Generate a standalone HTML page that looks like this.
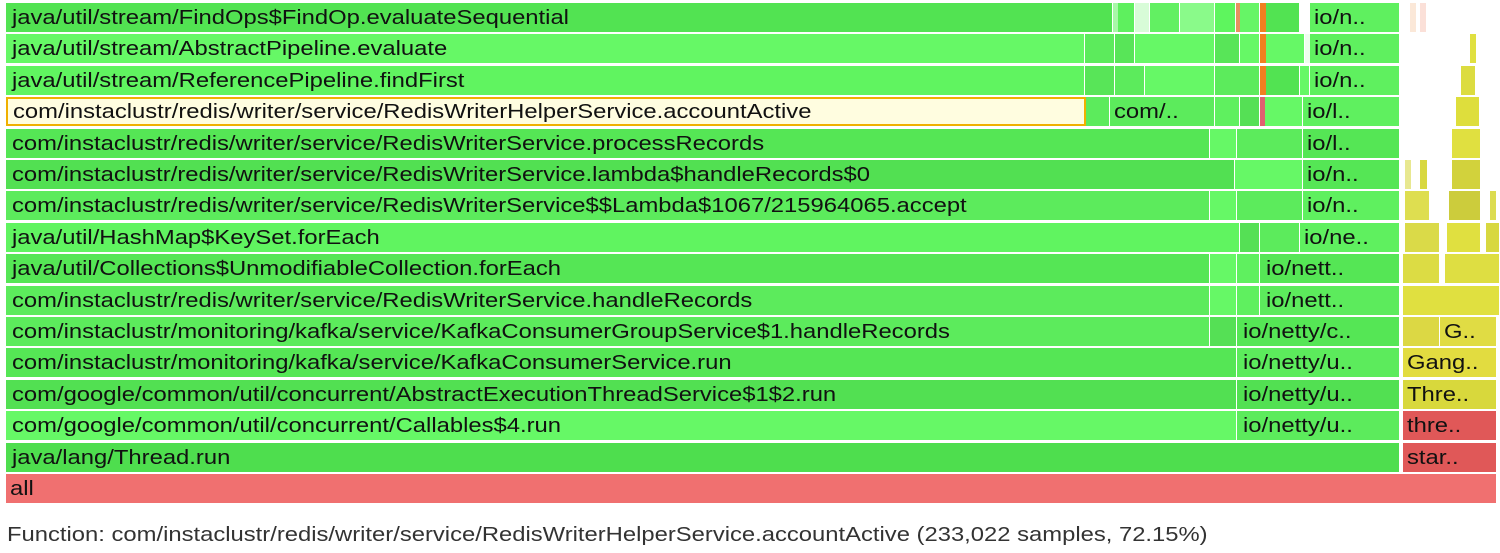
<!DOCTYPE html>
<html><head><meta charset="utf-8"><style>
html,body{margin:0;padding:0;background:#fff;width:1500px;height:553px;overflow:hidden;font-family:"Liberation Sans",sans-serif}
.f{position:absolute;height:29px;font-size:20px;line-height:30px;color:#111;white-space:nowrap;overflow:hidden;box-sizing:border-box;padding-left:6px}
.f span,#info span{display:inline-block;transform:scaleX(1.19);transform-origin:left center}
#info{position:absolute;left:7px;top:524px;font-size:20px;color:#333;white-space:nowrap}
</style></head><body>
<div id="g"></div>
<div id="info"><span>Function: com/instaclustr/redis/writer/service/RedisWriterHelperService.accountActive (233,022 samples, 72.15%)</span></div>
<script>
var rows=[
[[6,1113,'#52e352','java/util/stream/FindOps$FindOp.evaluateSequential'],[1113,1118,'#a8f8a8'],[1118,1135,'#5ef05e'],[1135,1150,'#d8fcd8'],[1150,1180,'#62f062'],[1180,1215,'#8afa8a'],[1215,1236,'#5ef55e'],[1236,1240,'#e89060'],[1240,1260,'#66f566'],[1260,1266,'#f08020'],[1266,1300,'#52e352'],[1300,1310,'#fff'],[1310,1400,'#5ff05f','io/n..'],[1410,1412,'#fbe8d8'],[1420,1422,'#fbe0d8']],
[[6,1085,'#66f866','java/util/stream/AbstractPipeline.evaluate'],[1085,1115,'#5ceb5c'],[1115,1135,'#58e558'],[1135,1215,'#66f866'],[1215,1240,'#58e558'],[1240,1260,'#66f866'],[1260,1266,'#f08020'],[1266,1305,'#66f866'],[1305,1310,'#eefeee'],[1310,1400,'#5ff05f','io/n..'],[1470,1475,'#e0e040']],
[[6,1085,'#60f460','java/util/stream/ReferencePipeline.findFirst'],[1085,1115,'#58e558'],[1115,1145,'#5ceb5c'],[1145,1215,'#66f866'],[1215,1260,'#5ceb5c'],[1260,1266,'#f08020'],[1266,1300,'#52e352'],[1300,1310,'#66f866'],[1310,1400,'#5ff05f','io/n..'],[1461,1476,'#dcdc40']],
[[1085,1110,'#5ceb5c'],[1110,1215,'#5ceb5c','com/..'],[1215,1240,'#5ff05f'],[1240,1260,'#55e055'],[1260,1265,'#e06070'],[1265,1303,'#66f866'],[1303,1400,'#5ff05f','io/l..'],[1456,1480,'#dede3c']],
[[6,1210,'#55e655','com/instaclustr/redis/writer/service/RedisWriterService.processRecords'],[1210,1237,'#66f866'],[1237,1303,'#5ceb5c'],[1303,1400,'#55e655','io/l..'],[1452,1481,'#e0e040']],
[[6,1235,'#52e052','com/instaclustr/redis/writer/service/RedisWriterService.lambda$handleRecords$0'],[1235,1303,'#66f866'],[1303,1400,'#55e655','io/n..'],[1405,1410,'#e8e890'],[1420,1428,'#d8d840'],[1452,1481,'#d2d23c']],
[[6,1210,'#5ceb5c','com/instaclustr/redis/writer/service/RedisWriterService$$Lambda$1067/215964065.accept'],[1210,1237,'#66f866'],[1237,1303,'#5ceb5c'],[1303,1400,'#5ff05f','io/n..'],[1405,1430,'#dede50'],[1449,1481,'#cccc3c'],[1490,1495,'#dcdc50']],
[[6,1240,'#60f460','java/util/HashMap$KeySet.forEach'],[1240,1260,'#55e055'],[1260,1300,'#5ceb5c'],[1300,1400,'#5ff05f','io/ne..'],[1405,1440,'#dada48'],[1447,1481,'#e0e040'],[1486,1500,'#d8d840']],
[[6,1210,'#55e655','java/util/Collections$UnmodifiableCollection.forEach'],[1210,1237,'#66f866'],[1237,1260,'#5ff05f'],[1260,1400,'#55e655','io/nett..'],[1403,1440,'#dcdc44'],[1445,1500,'#dede42']],
[[6,1210,'#5ceb5c','com/instaclustr/redis/writer/service/RedisWriterService.handleRecords'],[1210,1237,'#66f866'],[1237,1260,'#5ff05f'],[1260,1400,'#5ceb5c','io/nett..'],[1403,1500,'#e0e040']],
[[6,1210,'#5ceb5c','com/instaclustr/monitoring/kafka/service/KafkaConsumerGroupService$1.handleRecords'],[1210,1237,'#55e055'],[1237,1400,'#55e655','io/netty/c..'],[1403,1440,'#dcd844'],[1440,1497,'#e0dc44','G..']],
[[6,1237,'#55e655','com/instaclustr/monitoring/kafka/service/KafkaConsumerService.run'],[1237,1400,'#5ceb5c','io/netty/u..'],[1403,1497,'#e2dc40','Gang..']],
[[6,1237,'#52e052','com/google/common/util/concurrent/AbstractExecutionThreadService$1$2.run'],[1237,1400,'#52e052','io/netty/u..'],[1403,1497,'#d8d83c','Thre..']],
[[6,1237,'#66f866','com/google/common/util/concurrent/Callables$4.run'],[1237,1400,'#5ceb5c','io/netty/u..'],[1403,1497,'#e05858','thre..']],
[[6,1400,'#4ede4e','java/lang/Thread.run'],[1403,1497,'#e05858','star..']],
[[6,1497,'#f07070','all']]
];
var h='';
rows.forEach(function(r,i){var t=3+i*31.4;r.forEach(function(s){
h+='<div class="f" style="left:'+s[0]+'px;top:'+t+'px;width:'+(s[1]-s[0]-1)+'px;background:'+s[2]+(s[3]&&s[3].length<8?';padding-left:4px':'')+'"><span>'+(s[3]||'')+'</span></div>';});
if(i==3)h+='<div class="f" style="left:6px;top:'+t+'px;width:1080px;background:#fffde0;border:2px solid #f0b000;line-height:26px;padding-left:5px"><span>com/instaclustr/redis/writer/service/RedisWriterHelperService.accountActive</span></div>';
});
document.getElementById('g').innerHTML=h;
</script>
</body></html>
